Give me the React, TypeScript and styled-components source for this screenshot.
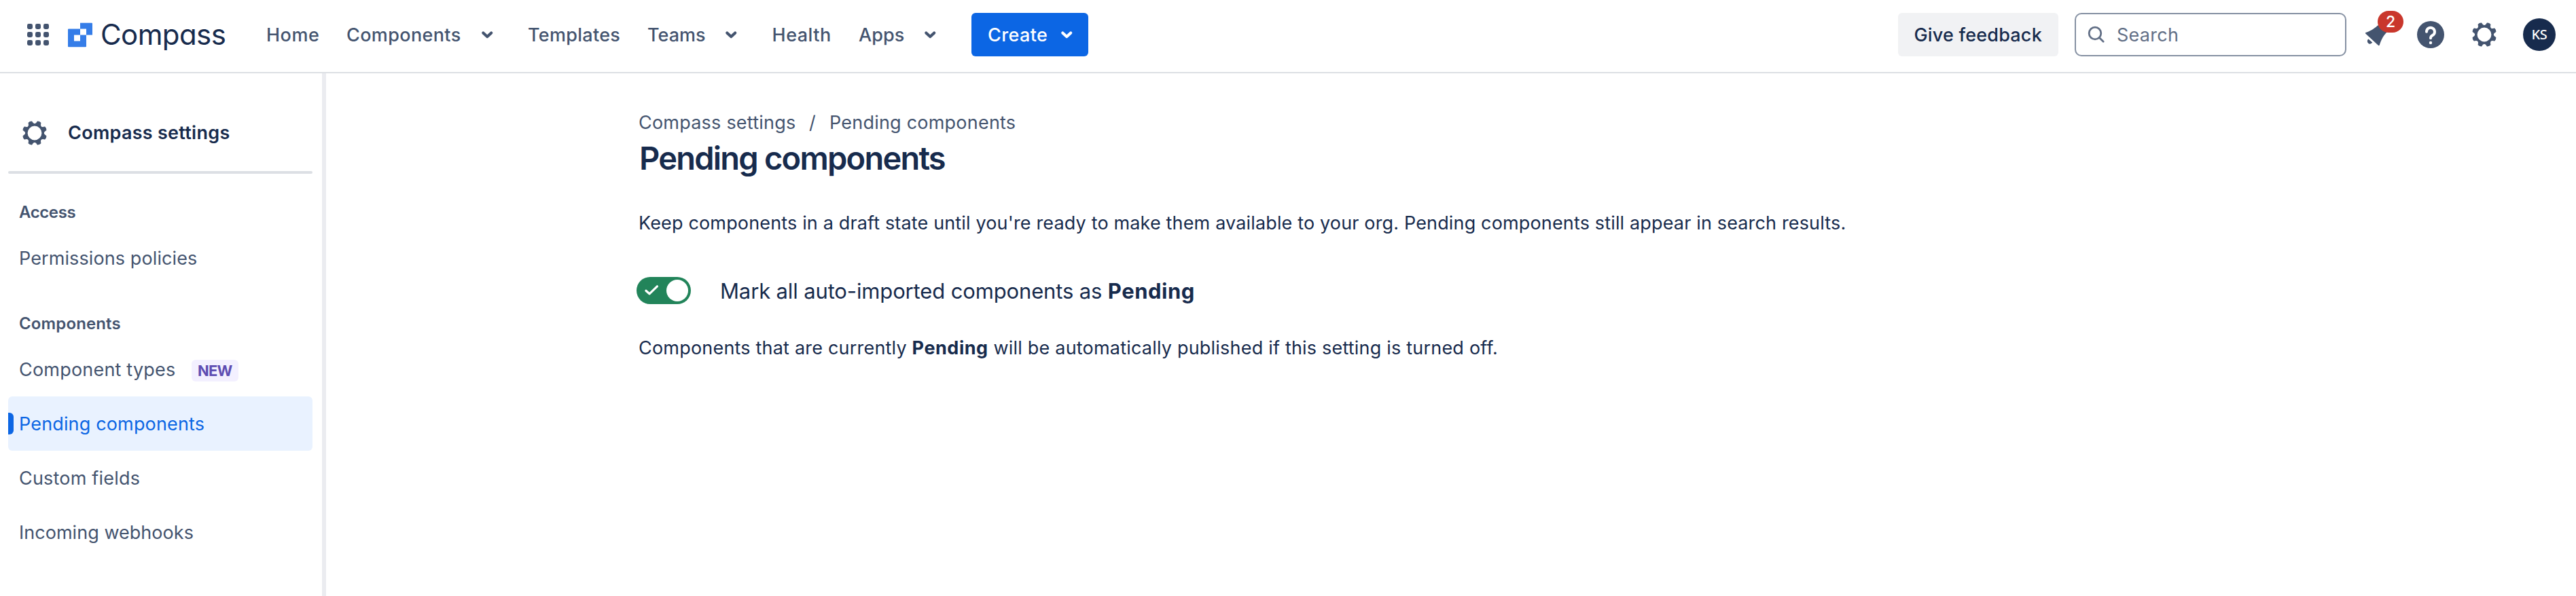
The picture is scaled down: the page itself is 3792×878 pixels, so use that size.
import React from "react";
import styled, { createGlobalStyle, css } from "styled-components";

const color = {
  text: "#172b4d",
  subtle: "#44546f",
  subtlest: "#626f86",
  border: "#dcdfe4",
  blue: "#0c66e4",
};

const GlobalStyle = createGlobalStyle`
  * { box-sizing: border-box; }
  body {
    margin: 0;
    background: #fff;
    color: ${color.text};
    font: 400 27px/40px Inter, "Liberation Sans", sans-serif;
    white-space: nowrap;
    overflow: hidden;
  }
  button, input { font: inherit; border: 0; margin: 0; }
  svg { display: block; flex: none; overflow: visible; }
`;

const Page = styled.div`
  display: flex;
  flex-direction: column;
  height: 878px;
`;

/* ---------- top navigation ---------- */

const TopBar = styled.header`
  display: flex;
  align-items: center;
  height: 108px;
  flex: none;
  padding: 0 30px 4px 40px;
  border-bottom: 2px solid ${color.border};
`;

const Brand = styled.a`
  display: flex;
  align-items: center;
  width: 292px;
  margin-left: 28px;
`;

const BrandName = styled.span`
  margin: 0 0 1px 12px;
  font-size: 42px;
  line-height: 48px;
  letter-spacing: -0.6px;
  font-feature-settings: "cv11";
`;

const NavItem = styled.a<{ $width: number; $tracking: number; $menu?: boolean }>`
  display: flex;
  align-items: center;
  justify-content: space-between;
  width: ${(p) => p.$width}px;
  padding-top: 1px;
  padding-right: ${(p) => (p.$menu ? 52 : 0)}px;
  letter-spacing: ${(p) => p.$tracking}px;
  font-weight: 500;
  color: ${color.subtle};
`;

const CreateButton = styled.button`
  display: flex;
  align-items: center;
  justify-content: space-between;
  width: 172px;
  height: 64px;
  padding: 1px 23.5px 0 24px;
  border-radius: 6px;
  background: ${color.blue};
  color: #fff;
  font-weight: 500;
  letter-spacing: 0.38px;
`;

const Actions = styled.div`
  display: flex;
  align-items: center;
  margin-left: auto;
`;

const FeedbackButton = styled.button`
  width: 236px;
  height: 64px;
  padding: 1px 0 0 23.5px;
  text-align: left;
  border-radius: 6px;
  background: #f1f2f4;
  color: ${color.text};
  font-weight: 500;
  letter-spacing: 0.19px;
`;

const SearchBox = styled.div`
  display: flex;
  align-items: center;
  width: 400px;
  height: 64px;
  margin: 0 24px;
  padding-left: 17px;
  border: 2px solid #8590a2;
  border-radius: 10px;
  color: ${color.subtlest};
  letter-spacing: 0.27px;
`;

const SearchLabel = styled.span`
  margin-left: 17px;
  padding-top: 2px;
`;

const IconSlot = styled.div<{ $gap?: number }>`
  position: relative;
  width: 40px;
  height: 40px;
  margin-left: ${(p) => p.$gap ?? 0}px;
  color: ${color.subtle};
`;

const CountBadge = styled.span`
  position: absolute;
  left: 22px;
  top: -15px;
  width: 38px;
  height: 32px;
  border-radius: 16px;
  background: #c9372c;
  color: #fff;
  font-size: 23px;
  font-weight: 500;
  line-height: 33px;
  text-align: center;
`;

const Avatar = styled.div`
  width: 48px;
  height: 48px;
  margin-left: 37px;
  border-radius: 50%;
  background: ${color.text};
  color: #fff;
  font: 500 20px/47px "Noto Sans", sans-serif;
  letter-spacing: -0.2px;
  text-align: center;
`;

/* ---------- sidebar ---------- */

const Body = styled.div`
  display: flex;
  flex: 1;
  min-height: 0;
`;

const Sidebar = styled.nav`
  width: 480px;
  flex: none;
  padding: 0 14px 0 12px;
  border-right: 6px solid #ebecf0;
`;

const SidebarTitle = styled.div`
  display: flex;
  align-items: center;
  height: 144px;
  padding: 31px 0 0 19px;
  color: ${color.subtle};
`;

const SidebarTitleText = styled.span`
  margin-left: 29px;
  padding-top: 1px;
  color: ${color.text};
  font-weight: 600;
  letter-spacing: 0.28px;
`;

const Rule = styled.hr`
  height: 4px;
  margin: 0;
  border: 0;
  border-radius: 2px;
  background: ${color.border};
`;

const GroupHeading = styled.h2<{ $tracking: number }>`
  height: 84px;
  margin: 0;
  padding: 36.5px 0 0 16px;
  color: ${color.subtle};
  font-size: 24px;
  font-weight: 600;
  letter-spacing: ${(p) => p.$tracking}px;
`;

const SideItem = styled.a<{ $tracking: number; $selected?: boolean }>`
  position: relative;
  display: flex;
  align-items: center;
  height: 80px;
  padding: 1px 0 0 16px;
  border-radius: 6px;
  letter-spacing: ${(p) => p.$tracking}px;
  color: ${(p) => (p.$selected ? color.blue : color.subtle)};
  ${(p) =>
    p.$selected &&
    css`
      background: #e9f2ff;
      &::before {
        content: "";
        position: absolute;
        left: 0;
        top: 24px;
        width: 8px;
        height: 32px;
        border-radius: 0 6px 6px 0;
        background: ${color.blue};
      }
    `}
`;

const NewTag = styled.span`
  width: 69px;
  height: 32px;
  margin: 3px 0 0 24px;
  padding-left: 8.5px;
  border-radius: 6px;
  background: #f3f0ff;
  color: #5e4db2;
  font-size: 22px;
  font-weight: 700;
  line-height: 32px;
  letter-spacing: -0.75px;
`;

/* ---------- content ---------- */

const Main = styled.main`
  flex: 1;
  padding: 52.5px 0 0 460px;
`;

const Breadcrumbs = styled.div`
  display: flex;
  color: ${color.subtle};
  letter-spacing: 0.22px;
`;

const Separator = styled.span`
  margin: 0 20px 0 19.5px;
  width: 10px;
`;

const Title = styled.h1`
  margin: 4.5px 0 0 1px;
  font-size: 47px;
  font-weight: 600;
  line-height: 56px;
  letter-spacing: -1.77px;
`;

const Paragraph = styled.p<{ $top: number; $tracking: number }>`
  margin: ${(p) => p.$top}px 0 0;
  letter-spacing: ${(p) => p.$tracking}px;
`;

const Strong = styled.strong`
  font-weight: 700;
  letter-spacing: 0.53px;
`;

const SettingRow = styled.label`
  display: flex;
  align-items: center;
  height: 40px;
  margin: 59.5px 0 0 -3px;
`;

const Toggle = styled.span`
  display: flex;
  align-items: center;
  justify-content: space-between;
  width: 80px;
  height: 40px;
  padding: 0 4px 0 12px;
  border-radius: 20px;
  background: #22845a;
`;

const Knob = styled.span`
  width: 32px;
  height: 32px;
  border-radius: 50%;
  background: #fff;
`;

const SettingText = styled.span`
  margin-left: 43px;
  padding-top: 1px;
  font-size: 31px;
  letter-spacing: -0.14px;
`;

/* ---------- icons ---------- */

const Chevron = () => (
  <svg width="16.5" height="10.5" viewBox="0 0 16.5 10.5">
    <path d="M2.3 2.4 8.25 8.1 14.2 2.4" fill="none" stroke="currentColor" strokeWidth="4.2" strokeLinecap="round" strokeLinejoin="round" />
  </svg>
);

const AppSwitcher = () => (
  <svg width="32" height="32" fill={color.subtle}>
    {[0, 12, 24].map((y) =>
      [0, 12, 24].map((x) => <rect key={`${x}-${y}`} x={x} y={y} width="8" height="8" rx="2.4" />)
    )}
  </svg>
);

const CompassMark = () => (
  <svg width="36" height="36" viewBox="0 0 36 36" fill="#357de8">
    <path d="M18 .7H35a1 1 0 0 1 1 1V18.5H27V9.6H18z" />
    <path d="M1 9.6H18V18.5H27V35.3a1 1 0 0 1-1 1H1a1 1 0 0 1-1-1V10.6a1 1 0 0 1 1-1zM9 18.5V27.4H18V18.5z" fillRule="evenodd" />
  </svg>
);

const Gear = () => (
  <svg width="40" height="40" viewBox="-20 -20 40 40">
    <circle r="12.1" fill="none" stroke="currentColor" strokeWidth="3.4" />
    {[0, 1, 2, 3, 4, 5, 6, 7].map((i) => (
      <path
        key={i}
        transform={`rotate(${i * 45 + 22.5})`}
        d="M-4.9-12Q-3-13.6-2.5-17.3Q0-18.4 2.5-17.3Q3-13.6 4.9-12Q0-13 -4.9-12z"
        fill="currentColor"
        stroke="currentColor"
        strokeWidth="1"
        strokeLinejoin="round"
      />
    ))}
  </svg>
);

const Bell = () => (
  <svg width="40" height="40" viewBox="0 0 40 40" fill="currentColor">
    <path d="M4.4 17.1C11 14.6 16.5 12 22 6.5L32 5L35.5 16.5C29.5 22 27 29 24.7 35.5Q24 36.9 22.9 35.8L4.2 18.4Q3.5 17.6 4.4 17.1z" />
    <path d="M8.4 26.6L14.2 31.5A3.9 3.9 0 1 1 8.4 26.6z" />
  </svg>
);

const Help = () => (
  <svg width="40" height="40" viewBox="0 0 40 40">
    <circle cx="20" cy="20" r="20" fill="currentColor" />
    <path d="M14 15.8a6 6 0 1 1 9.2 5C20.8 22.3 20 22.8 20 25.3" fill="none" stroke="#fff" strokeWidth="4" strokeLinecap="round" />
    <circle cx="20" cy="32" r="2.2" fill="#fff" />
  </svg>
);

const Magnifier = () => (
  <svg width="26" height="26" viewBox="0 0 26 26" fill="none" stroke="currentColor" strokeWidth="2.8" strokeLinecap="round">
    <circle cx="11" cy="11" r="8.8" />
    <path d="M17.4 17.4 23.2 23.2" />
  </svg>
);

const Check = () => (
  <svg width="21" height="17" viewBox="0 0 21 17" fill="none" stroke="#fff" strokeWidth="3.2" strokeLinecap="round" strokeLinejoin="round">
    <path d="M1.9 8.2 7 12.8 18.4 1.8" />
  </svg>
);

export default function App() {
  return (
    <Page>
      <GlobalStyle />
      <TopBar>
        <AppSwitcher />
        <Brand>
          <CompassMark />
          <BrandName>Compass</BrandName>
        </Brand>
        <NavItem $width={118} $tracking={0.5}>Home</NavItem>
        <NavItem $width={267} $tracking={0.36} $menu>Components <Chevron /></NavItem>
        <NavItem $width={176} $tracking={0.29}>Templates</NavItem>
        <NavItem $width={183.6} $tracking={0.04} $menu>Teams <Chevron /></NavItem>
        <NavItem $width={127.4} $tracking={0.48}>Health</NavItem>
        <NavItem $width={166} $tracking={0.06} $menu>Apps <Chevron /></NavItem>
        <CreateButton>Create <Chevron /></CreateButton>
        <Actions>
          <FeedbackButton>Give feedback</FeedbackButton>
          <SearchBox>
            <Magnifier />
            <SearchLabel>Search</SearchLabel>
          </SearchBox>
          <IconSlot>
            <Bell />
            <CountBadge>2</CountBadge>
          </IconSlot>
          <IconSlot $gap={40}><Help /></IconSlot>
          <IconSlot $gap={39}><Gear /></IconSlot>
          <Avatar>KS</Avatar>
        </Actions>
      </TopBar>
      <Body>
        <Sidebar>
          <SidebarTitle>
            <Gear />
            <SidebarTitleText>Compass settings</SidebarTitleText>
          </SidebarTitle>
          <Rule />
          <GroupHeading $tracking={-0.4}>Access</GroupHeading>
          <SideItem $tracking={0.1}>Permissions policies</SideItem>
          <GroupHeading $tracking={0.13}>Components</GroupHeading>
          <SideItem $tracking={0.2}>Component types <NewTag>NEW</NewTag></SideItem>
          <SideItem $tracking={0.15} $selected>Pending components</SideItem>
          <SideItem $tracking={0.2}>Custom fields</SideItem>
          <SideItem $tracking={0.03}>Incoming webhooks</SideItem>
        </Sidebar>
        <Main>
          <Breadcrumbs>
            <span>Compass settings</span>
            <Separator>/</Separator>
            <span>Pending components</span>
          </Breadcrumbs>
          <Title>Pending components</Title>
          <Paragraph $top={47.5} $tracking={0.15}>
            Keep components in a draft state until you're ready to make them available to your org. Pending components still appear in search results.
          </Paragraph>
          <SettingRow>
            <Toggle><Check /><Knob /></Toggle>
            <SettingText>
              Mark all auto-imported components as <Strong>Pending</Strong>
            </SettingText>
          </SettingRow>
          <Paragraph $top={44.5} $tracking={0.2}>
            Components that are currently <Strong>Pending</Strong> will be automatically published if this setting is turned off.
          </Paragraph>
        </Main>
      </Body>
    </Page>
  );
}
